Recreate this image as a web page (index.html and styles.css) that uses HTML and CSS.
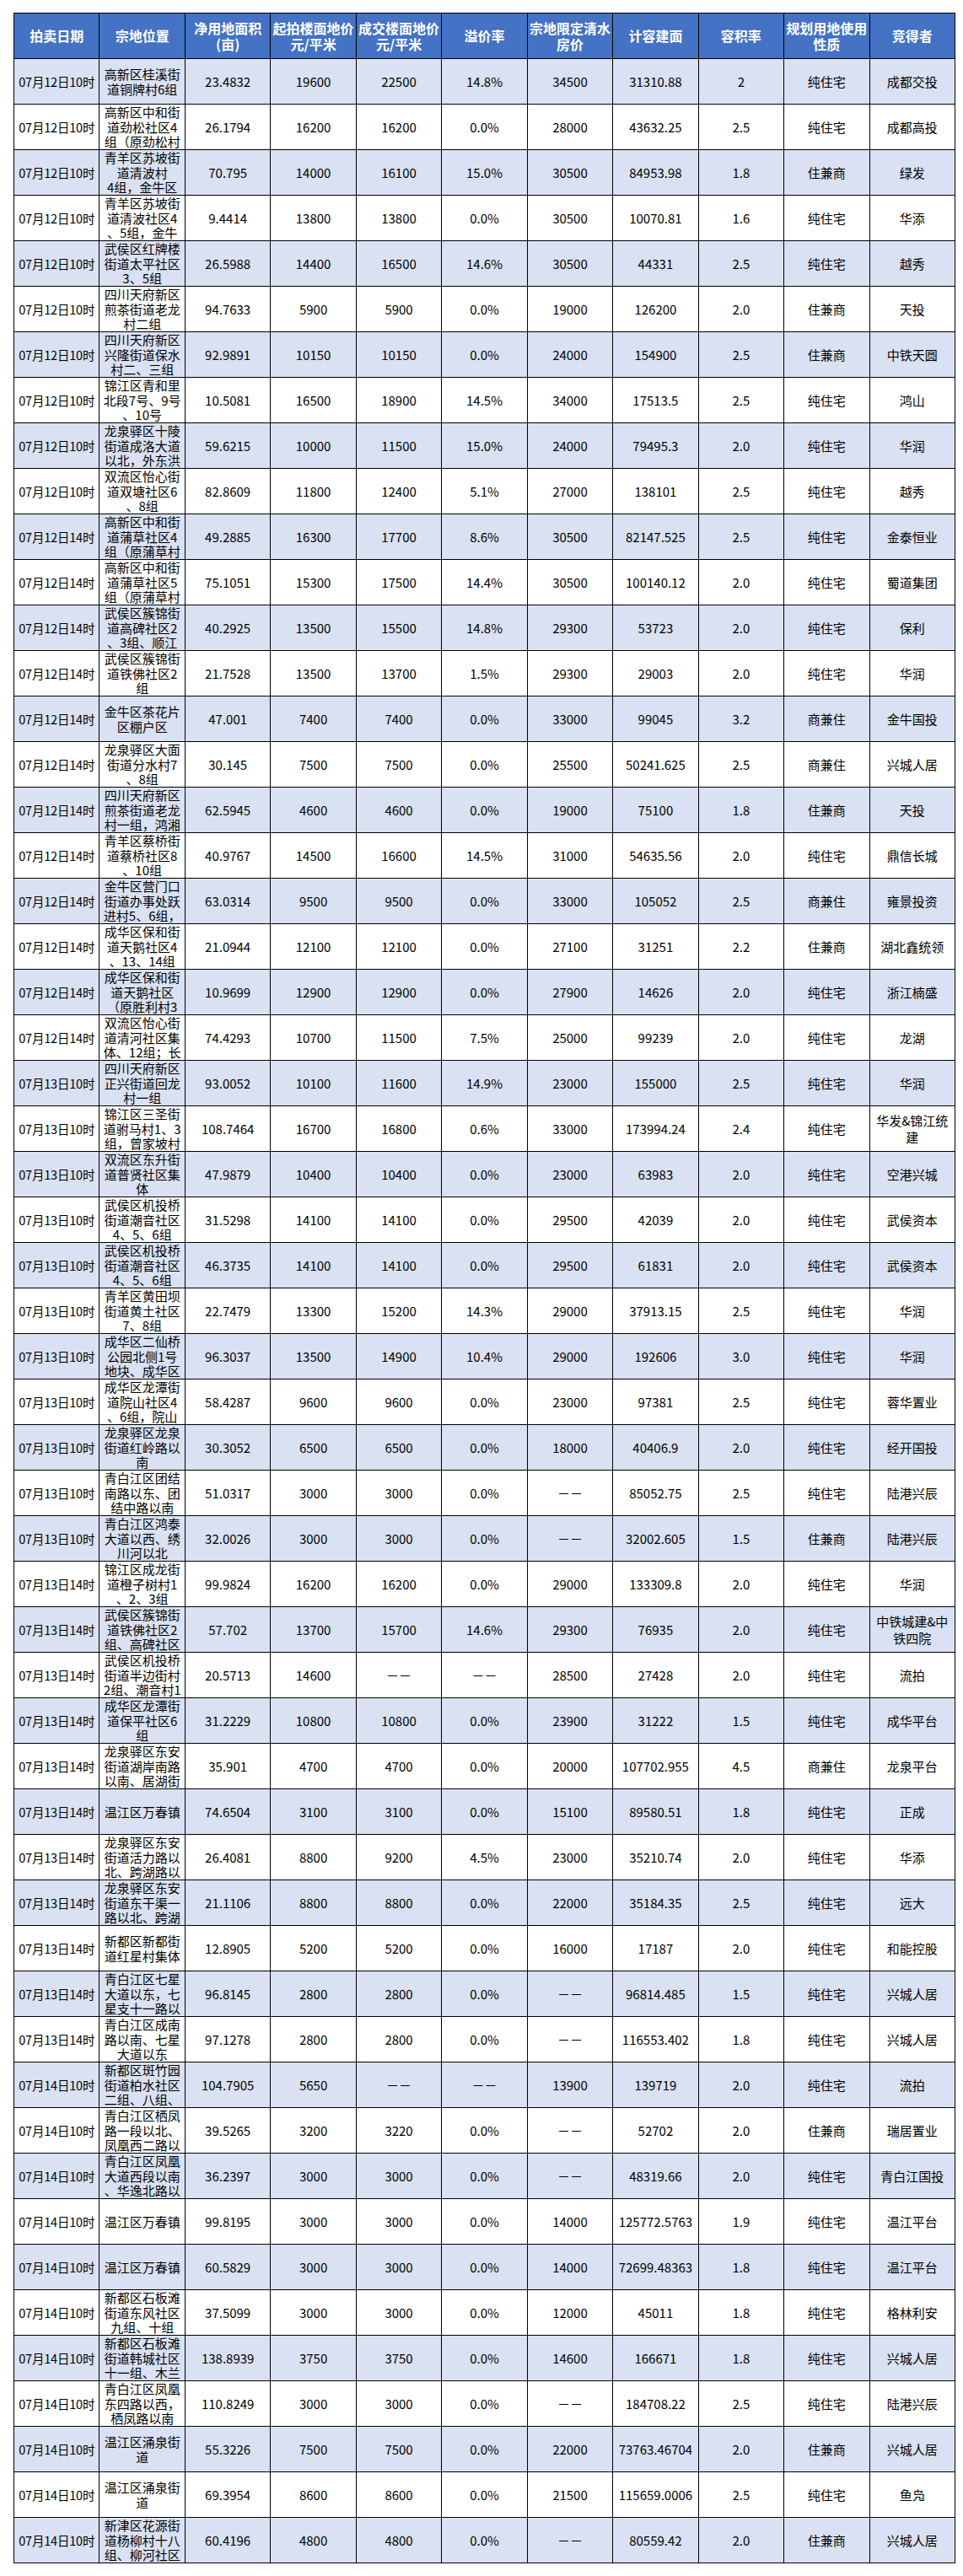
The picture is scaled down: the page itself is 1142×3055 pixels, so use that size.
FILE: index.html
```html
<!DOCTYPE html>
<html lang="zh-CN">
<head>
<meta charset="utf-8">
<title>成都土拍成交表</title>
<link rel="stylesheet" href="styles.css">
</head>
<body>
<div class="sheet">
<table class="land">
<thead>
<tr>
<th>拍卖日期</th>
<th>宗地位置</th>
<th>净用地面积<br>(亩)</th>
<th>起拍楼面地价<br>元/平米</th>
<th>成交楼面地价<br>元/平米</th>
<th>溢价率</th>
<th>宗地限定清水<br>房价</th>
<th>计容建面</th>
<th>容积率</th>
<th>规划用地使用<br>性质</th>
<th>竞得者</th>
</tr>
</thead>
<tbody>
<tr><td class="date">07月12日10时</td><td><div class="loc">高新区桂溪街<br>道铜牌村6组</div></td><td>23.4832</td><td>19600</td><td>22500</td><td>14.8%</td><td>34500</td><td>31310.88</td><td>2</td><td>纯住宅</td><td>成都交投</td></tr>
<tr><td class="date">07月12日10时</td><td><div class="loc">高新区中和街<br>道劲松社区4<br>组（原劲松村</div></td><td>26.1794</td><td>16200</td><td>16200</td><td>0.0%</td><td>28000</td><td>43632.25</td><td>2.5</td><td>纯住宅</td><td>成都高投</td></tr>
<tr><td class="date">07月12日10时</td><td><div class="loc">青羊区苏坡街<br>道清波村<br>4组，金牛区</div></td><td>70.795</td><td>14000</td><td>16100</td><td>15.0%</td><td>30500</td><td>84953.98</td><td>1.8</td><td>住兼商</td><td>绿发</td></tr>
<tr><td class="date">07月12日10时</td><td><div class="loc">青羊区苏坡街<br>道清波社区4<br>、5组，金牛</div></td><td>9.4414</td><td>13800</td><td>13800</td><td>0.0%</td><td>30500</td><td>10070.81</td><td>1.6</td><td>纯住宅</td><td>华添</td></tr>
<tr><td class="date">07月12日10时</td><td><div class="loc">武侯区红牌楼<br>街道太平社区<br>3、5组</div></td><td>26.5988</td><td>14400</td><td>16500</td><td>14.6%</td><td>30500</td><td>44331</td><td>2.5</td><td>纯住宅</td><td>越秀</td></tr>
<tr><td class="date">07月12日10时</td><td><div class="loc">四川天府新区<br>煎茶街道老龙<br>村二组</div></td><td>94.7633</td><td>5900</td><td>5900</td><td>0.0%</td><td>19000</td><td>126200</td><td>2.0</td><td>住兼商</td><td>天投</td></tr>
<tr><td class="date">07月12日10时</td><td><div class="loc">四川天府新区<br>兴隆街道保水<br>村二、三组</div></td><td>92.9891</td><td>10150</td><td>10150</td><td>0.0%</td><td>24000</td><td>154900</td><td>2.5</td><td>住兼商</td><td>中铁天圆</td></tr>
<tr><td class="date">07月12日10时</td><td><div class="loc">锦江区青和里<br>北段7号、9号<br>、10号</div></td><td>10.5081</td><td>16500</td><td>18900</td><td>14.5%</td><td>34000</td><td>17513.5</td><td>2.5</td><td>纯住宅</td><td>鸿山</td></tr>
<tr><td class="date">07月12日10时</td><td><div class="loc">龙泉驿区十陵<br>街道成洛大道<br>以北，外东洪</div></td><td>59.6215</td><td>10000</td><td>11500</td><td>15.0%</td><td>24000</td><td>79495.3</td><td>2.0</td><td>纯住宅</td><td>华润</td></tr>
<tr><td class="date">07月12日10时</td><td><div class="loc">双流区怡心街<br>道双塘社区6<br>、8组</div></td><td>82.8609</td><td>11800</td><td>12400</td><td>5.1%</td><td>27000</td><td>138101</td><td>2.5</td><td>纯住宅</td><td>越秀</td></tr>
<tr><td class="date">07月12日14时</td><td><div class="loc">高新区中和街<br>道蒲草社区4<br>组（原蒲草村</div></td><td>49.2885</td><td>16300</td><td>17700</td><td>8.6%</td><td>30500</td><td>82147.525</td><td>2.5</td><td>纯住宅</td><td>金泰恒业</td></tr>
<tr><td class="date">07月12日14时</td><td><div class="loc">高新区中和街<br>道蒲草社区5<br>组（原蒲草村</div></td><td>75.1051</td><td>15300</td><td>17500</td><td>14.4%</td><td>30500</td><td>100140.12</td><td>2.0</td><td>纯住宅</td><td>蜀道集团</td></tr>
<tr><td class="date">07月12日14时</td><td><div class="loc">武侯区簇锦街<br>道高碑社区2<br>、3组、顺江</div></td><td>40.2925</td><td>13500</td><td>15500</td><td>14.8%</td><td>29300</td><td>53723</td><td>2.0</td><td>纯住宅</td><td>保利</td></tr>
<tr><td class="date">07月12日14时</td><td><div class="loc">武侯区簇锦街<br>道铁佛社区2<br>组</div></td><td>21.7528</td><td>13500</td><td>13700</td><td>1.5%</td><td>29300</td><td>29003</td><td>2.0</td><td>纯住宅</td><td>华润</td></tr>
<tr><td class="date">07月12日14时</td><td><div class="loc">金牛区茶花片<br>区棚户区</div></td><td>47.001</td><td>7400</td><td>7400</td><td>0.0%</td><td>33000</td><td>99045</td><td>3.2</td><td>商兼住</td><td>金牛国投</td></tr>
<tr><td class="date">07月12日14时</td><td><div class="loc">龙泉驿区大面<br>街道分水村7<br>、8组</div></td><td>30.145</td><td>7500</td><td>7500</td><td>0.0%</td><td>25500</td><td>50241.625</td><td>2.5</td><td>商兼住</td><td>兴城人居</td></tr>
<tr><td class="date">07月12日14时</td><td><div class="loc">四川天府新区<br>煎茶街道老龙<br>村一组，鸿湘</div></td><td>62.5945</td><td>4600</td><td>4600</td><td>0.0%</td><td>19000</td><td>75100</td><td>1.8</td><td>住兼商</td><td>天投</td></tr>
<tr><td class="date">07月12日14时</td><td><div class="loc">青羊区蔡桥街<br>道蔡桥社区8<br>、10组</div></td><td>40.9767</td><td>14500</td><td>16600</td><td>14.5%</td><td>31000</td><td>54635.56</td><td>2.0</td><td>纯住宅</td><td>鼎信长城</td></tr>
<tr><td class="date">07月12日14时</td><td><div class="loc">金牛区营门口<br>街道办事处跃<br>进村5、6组，</div></td><td>63.0314</td><td>9500</td><td>9500</td><td>0.0%</td><td>33000</td><td>105052</td><td>2.5</td><td>商兼住</td><td>雍景投资</td></tr>
<tr><td class="date">07月12日14时</td><td><div class="loc">成华区保和街<br>道天鹅社区4<br>、13、14组</div></td><td>21.0944</td><td>12100</td><td>12100</td><td>0.0%</td><td>27100</td><td>31251</td><td>2.2</td><td>住兼商</td><td>湖北鑫统领</td></tr>
<tr><td class="date">07月12日14时</td><td><div class="loc">成华区保和街<br>道天鹅社区<br>（原胜利村3</div></td><td>10.9699</td><td>12900</td><td>12900</td><td>0.0%</td><td>27900</td><td>14626</td><td>2.0</td><td>纯住宅</td><td>浙江楠盛</td></tr>
<tr><td class="date">07月12日14时</td><td><div class="loc">双流区怡心街<br>道清河社区集<br>体、12组；长</div></td><td>74.4293</td><td>10700</td><td>11500</td><td>7.5%</td><td>25000</td><td>99239</td><td>2.0</td><td>纯住宅</td><td>龙湖</td></tr>
<tr><td class="date">07月13日10时</td><td><div class="loc">四川天府新区<br>正兴街道回龙<br>村一组</div></td><td>93.0052</td><td>10100</td><td>11600</td><td>14.9%</td><td>23000</td><td>155000</td><td>2.5</td><td>纯住宅</td><td>华润</td></tr>
<tr><td class="date">07月13日10时</td><td><div class="loc">锦江区三圣街<br>道驸马村1、3<br>组，曾家坡村</div></td><td>108.7464</td><td>16700</td><td>16800</td><td>0.6%</td><td>33000</td><td>173994.24</td><td>2.4</td><td>纯住宅</td><td><div class="two">华发&amp;锦江统<br>建</div></td></tr>
<tr><td class="date">07月13日10时</td><td><div class="loc">双流区东升街<br>道普贤社区集<br>体</div></td><td>47.9879</td><td>10400</td><td>10400</td><td>0.0%</td><td>23000</td><td>63983</td><td>2.0</td><td>纯住宅</td><td>空港兴城</td></tr>
<tr><td class="date">07月13日10时</td><td><div class="loc">武侯区机投桥<br>街道潮音社区<br>4、5、6组</div></td><td>31.5298</td><td>14100</td><td>14100</td><td>0.0%</td><td>29500</td><td>42039</td><td>2.0</td><td>纯住宅</td><td>武侯资本</td></tr>
<tr><td class="date">07月13日10时</td><td><div class="loc">武侯区机投桥<br>街道潮音社区<br>4、5、6组</div></td><td>46.3735</td><td>14100</td><td>14100</td><td>0.0%</td><td>29500</td><td>61831</td><td>2.0</td><td>纯住宅</td><td>武侯资本</td></tr>
<tr><td class="date">07月13日10时</td><td><div class="loc">青羊区黄田坝<br>街道黄土社区<br>7、8组</div></td><td>22.7479</td><td>13300</td><td>15200</td><td>14.3%</td><td>29000</td><td>37913.15</td><td>2.5</td><td>纯住宅</td><td>华润</td></tr>
<tr><td class="date">07月13日10时</td><td><div class="loc">成华区二仙桥<br>公园北侧1号<br>地块、成华区</div></td><td>96.3037</td><td>13500</td><td>14900</td><td>10.4%</td><td>29000</td><td>192606</td><td>3.0</td><td>纯住宅</td><td>华润</td></tr>
<tr><td class="date">07月13日10时</td><td><div class="loc">成华区龙潭街<br>道院山社区4<br>、6组，院山</div></td><td>58.4287</td><td>9600</td><td>9600</td><td>0.0%</td><td>23000</td><td>97381</td><td>2.5</td><td>纯住宅</td><td>蓉华置业</td></tr>
<tr><td class="date">07月13日10时</td><td><div class="loc">龙泉驿区龙泉<br>街道红岭路以<br>南</div></td><td>30.3052</td><td>6500</td><td>6500</td><td>0.0%</td><td>18000</td><td>40406.9</td><td>2.0</td><td>纯住宅</td><td>经开国投</td></tr>
<tr><td class="date">07月13日10时</td><td><div class="loc">青白江区团结<br>南路以东、团<br>结中路以南</div></td><td>51.0317</td><td>3000</td><td>3000</td><td>0.0%</td><td>－－</td><td>85052.75</td><td>2.5</td><td>纯住宅</td><td>陆港兴辰</td></tr>
<tr><td class="date">07月13日10时</td><td><div class="loc">青白江区鸿泰<br>大道以西、绣<br>川河以北</div></td><td>32.0026</td><td>3000</td><td>3000</td><td>0.0%</td><td>－－</td><td>32002.605</td><td>1.5</td><td>住兼商</td><td>陆港兴辰</td></tr>
<tr><td class="date">07月13日14时</td><td><div class="loc">锦江区成龙街<br>道橙子树村1<br>、2、3组</div></td><td>99.9824</td><td>16200</td><td>16200</td><td>0.0%</td><td>29000</td><td>133309.8</td><td>2.0</td><td>纯住宅</td><td>华润</td></tr>
<tr><td class="date">07月13日14时</td><td><div class="loc">武侯区簇锦街<br>道铁佛社区2<br>组、高碑社区</div></td><td>57.702</td><td>13700</td><td>15700</td><td>14.6%</td><td>29300</td><td>76935</td><td>2.0</td><td>纯住宅</td><td><div class="two">中铁城建&amp;中<br>铁四院</div></td></tr>
<tr><td class="date">07月13日14时</td><td><div class="loc">武侯区机投桥<br>街道半边街村<br>2组、潮音村1</div></td><td>20.5713</td><td>14600</td><td>－－</td><td>－－</td><td>28500</td><td>27428</td><td>2.0</td><td>纯住宅</td><td>流拍</td></tr>
<tr><td class="date">07月13日14时</td><td><div class="loc">成华区龙潭街<br>道保平社区6<br>组</div></td><td>31.2229</td><td>10800</td><td>10800</td><td>0.0%</td><td>23900</td><td>31222</td><td>1.5</td><td>纯住宅</td><td>成华平台</td></tr>
<tr><td class="date">07月13日14时</td><td><div class="loc">龙泉驿区东安<br>街道湖岸南路<br>以南、居湖街</div></td><td>35.901</td><td>4700</td><td>4700</td><td>0.0%</td><td>20000</td><td>107702.955</td><td>4.5</td><td>商兼住</td><td>龙泉平台</td></tr>
<tr><td class="date">07月13日14时</td><td><div class="loc">温江区万春镇</div></td><td>74.6504</td><td>3100</td><td>3100</td><td>0.0%</td><td>15100</td><td>89580.51</td><td>1.8</td><td>纯住宅</td><td>正成</td></tr>
<tr><td class="date">07月13日14时</td><td><div class="loc">龙泉驿区东安<br>街道活力路以<br>北、跨湖路以</div></td><td>26.4081</td><td>8800</td><td>9200</td><td>4.5%</td><td>23000</td><td>35210.74</td><td>2.0</td><td>纯住宅</td><td>华添</td></tr>
<tr><td class="date">07月13日14时</td><td><div class="loc">龙泉驿区东安<br>街道东干渠一<br>路以北、跨湖</div></td><td>21.1106</td><td>8800</td><td>8800</td><td>0.0%</td><td>22000</td><td>35184.35</td><td>2.5</td><td>纯住宅</td><td>远大</td></tr>
<tr><td class="date">07月13日14时</td><td><div class="loc">新都区新都街<br>道红星村集体</div></td><td>12.8905</td><td>5200</td><td>5200</td><td>0.0%</td><td>16000</td><td>17187</td><td>2.0</td><td>纯住宅</td><td>和能控股</td></tr>
<tr><td class="date">07月13日14时</td><td><div class="loc">青白江区七星<br>大道以东，七<br>星支十一路以</div></td><td>96.8145</td><td>2800</td><td>2800</td><td>0.0%</td><td>－－</td><td>96814.485</td><td>1.5</td><td>纯住宅</td><td>兴城人居</td></tr>
<tr><td class="date">07月13日14时</td><td><div class="loc">青白江区成南<br>路以南、七星<br>大道以东</div></td><td>97.1278</td><td>2800</td><td>2800</td><td>0.0%</td><td>－－</td><td>116553.402</td><td>1.8</td><td>纯住宅</td><td>兴城人居</td></tr>
<tr><td class="date">07月14日10时</td><td><div class="loc">新都区斑竹园<br>街道柏水社区<br>二组、八组、</div></td><td>104.7905</td><td>5650</td><td>－－</td><td>－－</td><td>13900</td><td>139719</td><td>2.0</td><td>纯住宅</td><td>流拍</td></tr>
<tr><td class="date">07月14日10时</td><td><div class="loc">青白江区栖凤<br>路一段以北、<br>凤凰西二路以</div></td><td>39.5265</td><td>3200</td><td>3220</td><td>0.0%</td><td>－－</td><td>52702</td><td>2.0</td><td>住兼商</td><td>瑞居置业</td></tr>
<tr><td class="date">07月14日10时</td><td><div class="loc">青白江区凤凰<br>大道西段以南<br>、华逸北路以</div></td><td>36.2397</td><td>3000</td><td>3000</td><td>0.0%</td><td>－－</td><td>48319.66</td><td>2.0</td><td>纯住宅</td><td>青白江国投</td></tr>
<tr><td class="date">07月14日10时</td><td><div class="loc">温江区万春镇</div></td><td>99.8195</td><td>3000</td><td>3000</td><td>0.0%</td><td>14000</td><td>125772.5763</td><td>1.9</td><td>纯住宅</td><td>温江平台</td></tr>
<tr><td class="date">07月14日10时</td><td><div class="loc">温江区万春镇</div></td><td>60.5829</td><td>3000</td><td>3000</td><td>0.0%</td><td>14000</td><td>72699.48363</td><td>1.8</td><td>纯住宅</td><td>温江平台</td></tr>
<tr><td class="date">07月14日10时</td><td><div class="loc">新都区石板滩<br>街道东风社区<br>九组、十组</div></td><td>37.5099</td><td>3000</td><td>3000</td><td>0.0%</td><td>12000</td><td>45011</td><td>1.8</td><td>纯住宅</td><td>格林利安</td></tr>
<tr><td class="date">07月14日10时</td><td><div class="loc">新都区石板滩<br>街道韩城社区<br>十一组、木兰</div></td><td>138.8939</td><td>3750</td><td>3750</td><td>0.0%</td><td>14600</td><td>166671</td><td>1.8</td><td>纯住宅</td><td>兴城人居</td></tr>
<tr><td class="date">07月14日10时</td><td><div class="loc">青白江区凤凰<br>东四路以西，<br>栖凤路以南</div></td><td>110.8249</td><td>3000</td><td>3000</td><td>0.0%</td><td>－－</td><td>184708.22</td><td>2.5</td><td>纯住宅</td><td>陆港兴辰</td></tr>
<tr><td class="date">07月14日10时</td><td><div class="loc">温江区涌泉街<br>道</div></td><td>55.3226</td><td>7500</td><td>7500</td><td>0.0%</td><td>22000</td><td>73763.46704</td><td>2.0</td><td>住兼商</td><td>兴城人居</td></tr>
<tr><td class="date">07月14日10时</td><td><div class="loc">温江区涌泉街<br>道</div></td><td>69.3954</td><td>8600</td><td>8600</td><td>0.0%</td><td>21500</td><td>115659.0006</td><td>2.5</td><td>纯住宅</td><td>鱼凫</td></tr>
<tr><td class="date">07月14日10时</td><td><div class="loc">新津区花源街<br>道杨柳村十八<br>组、柳河社区</div></td><td>60.4196</td><td>4800</td><td>4800</td><td>0.0%</td><td>－－</td><td>80559.42</td><td>2.0</td><td>住兼商</td><td>兴城人居</td></tr>
</tbody>
</table>
</div>
</body>
</html>
```

FILE: styles.css
```css
html, body {
  margin: 0;
  padding: 0;
  background: #ffffff;
}

body {
  font-family: "Noto Sans CJK SC", "Noto Sans", sans-serif;
  color: #000000;
}

.sheet {
  padding: 15px 0 16px 16px;
}

.land {
  border-collapse: collapse;
  table-layout: fixed;
  width: 1117px;
}

.land th,
.land td {
  border: 1px solid #000000;
  padding: 0;
  text-align: center;
  vertical-align: middle;
}

.land thead tr,
.land tbody tr {
  height: 54px;
}

.land th {
  background: #4472c4;
  color: #ffffff;
  font-size: 16px;
  font-weight: 700;
  line-height: 19px;
}

.land td {
  font-size: 15px;
  line-height: 18px;
  white-space: nowrap;
}

.land td.date {
  font-size: 14.5px;
  letter-spacing: -0.2px;
}

.land tbody tr:nth-child(odd) td {
  background: #d9e1f2;
}

.loc {
  height: 53px;
  display: flex;
  flex-direction: column;
  justify-content: center;
  line-height: 17.5px;
}

.two {
  line-height: 20px;
}
```
